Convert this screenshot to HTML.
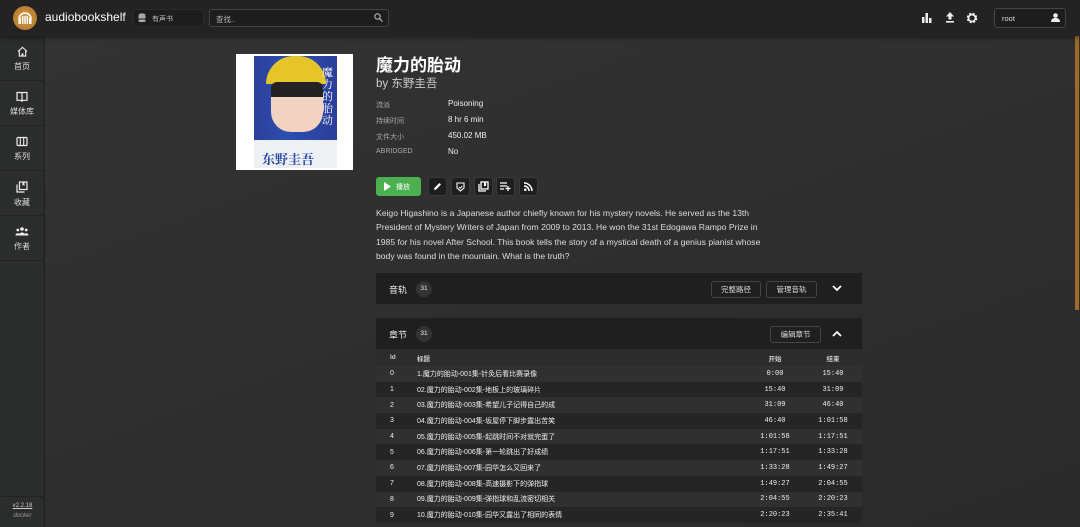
<!DOCTYPE html>
<html><head><meta charset="utf-8"><style>
*{margin:0;padding:0;box-sizing:border-box}
body{width:1080px;height:527px;overflow:hidden;background:#2d2d2d;font-family:"Liberation Sans","Noto Sans CJK SC",sans-serif;color:#eee;position:relative}
.hdr{position:absolute;left:0;top:0;width:1080px;height:36px;background:#232323;box-shadow:0 2px 4px rgba(0,0,0,.4);z-index:2}
.side{position:absolute;left:0;top:36px;width:45px;height:491px;background:#2b2d2d;border-right:1px solid #1f1f1f}
.nav{height:45px;border-bottom:1px solid #222;text-align:center;font-size:8px;color:#ddd;padding-top:10px}
.nav svg{display:block;margin:0 auto 4px}
.main{position:absolute;left:45px;top:36px;right:0;bottom:0;background:linear-gradient(160deg,#333 0%,#2a2a2a 100%)}
.abs{position:absolute}
.ib{position:absolute;top:177px;width:19px;height:19px;background:#1e1e1e;border:1px solid #3a3a3a;border-radius:3px;display:flex;align-items:center;justify-content:center}
.lbl{position:absolute;left:376px;font-size:7px;color:#aaa}
.val{position:absolute;left:448px;font-size:8px;color:#eee}
.panel{position:absolute;left:376px;width:486px;background:#1f1f1f}
.badge{position:absolute;width:16px;height:16px;border-radius:8px;background:#333;font-size:6.5px;text-align:center;line-height:16px}
.btn{position:absolute;height:17px;border:1px solid #444;border-radius:3px;font-size:7.5px;line-height:15px;text-align:center;color:#ddd}
table{position:absolute;left:376px;top:349px;width:486px;border-collapse:collapse;font-size:7px}
td{height:15.7px;padding:0}
tr:nth-child(odd){background:#252525}tr:nth-child(even){background:#303030}
tr.h{background:#2c2c2c}tr.h td{height:17px;font-size:6.5px;color:#ccc;font-weight:bold}
.m{font-family:"Liberation Mono",monospace;text-align:center}
</style></head><body>
<div class="hdr">
 <div class="abs" style="left:13px;top:6px;width:24px;height:24px;border-radius:12px;background:radial-gradient(circle,#d9a050,#a86e22)"></div>
 <svg class="abs" style="left:17px;top:10px" width="16" height="16" viewBox="0 0 16 16"><path d="M2 9a6 6 0 0112 0" fill="none" stroke="#fff" stroke-width="1.6"/><rect x="1.5" y="8" width="2.5" height="6" fill="#fff"/><rect x="12" y="8" width="2.5" height="6" fill="#fff"/><rect x="5" y="6" width="1.4" height="8" fill="#fff"/><rect x="7.3" y="6" width="1.4" height="8" fill="#fff"/><rect x="9.6" y="6" width="1.4" height="8" fill="#fff"/></svg>
 <div class="abs" style="left:45px;top:10px;font-size:12px;color:#fff">audiobookshelf</div>
 <div class="abs" style="left:133px;top:9px;width:71px;height:18px;background:#1d1d1d;border:1px solid #2a2a2a;border-radius:3px;font-size:7px;color:#bbb;padding:4px 0 0 18px">有声书</div>
 <svg class="abs" style="left:138px;top:13px" width="8" height="10"><ellipse cx="4" cy="2" rx="3.5" ry="1.6" fill="#aaa"/><rect x=".5" y="3" width="7" height="2.5" fill="#aaa"/><rect x=".5" y="6.5" width="7" height="2.5" rx="1" fill="#aaa"/></svg>
 <div class="abs" style="left:209px;top:9px;width:180px;height:18px;background:#1d1d1d;border:1px solid #444;border-radius:3px;font-size:7.5px;color:#bbb;padding:4px 0 0 6px">查找..</div>
 <svg class="abs" style="left:374px;top:13px" width="9" height="9"><circle cx="3.5" cy="3.5" r="2.7" fill="none" stroke="#bbb" stroke-width="1.1"/><path d="M5.5 5.5L8.5 8.5" stroke="#bbb" stroke-width="1.2"/></svg>
 <svg class="abs" style="left:922px;top:13px" width="10" height="10"><rect x="0" y="4" width="2.5" height="6" fill="#eee"/><rect x="3.5" y="0" width="2.5" height="10" fill="#eee"/><rect x="7" y="5" width="2.5" height="5" fill="#eee"/></svg>
 <svg class="abs" style="left:945px;top:12px" width="10" height="11"><path d="M5 0L9 4.5H6.5V7.5h-3V4.5H1z" fill="#eee"/><rect x="1" y="9" width="8" height="1.6" fill="#eee"/></svg>
 <svg class="abs" style="left:966px;top:12px" width="12" height="12" viewBox="0 0 12 12"><circle cx="6" cy="6" r="4" fill="none" stroke="#eee" stroke-width="2.6" stroke-dasharray="2 1.2"/><circle cx="6" cy="6" r="3.4" fill="none" stroke="#eee" stroke-width="1.6"/></svg>
 <div class="abs" style="left:994px;top:8px;width:72px;height:20px;border:1px solid #444;border-radius:3px;background:#1d1d1d;font-size:7.5px;color:#ddd;padding:5px 0 0 7px">root</div>
 <svg class="abs" style="left:1051px;top:13px" width="9" height="9"><circle cx="4.5" cy="2.5" r="2.3" fill="#eee"/><path d="M0 9c0-3 2-4 4.5-4S9 6 9 9z" fill="#eee"/></svg>
</div>
<div class="side">
 <div class="nav"><svg width="11" height="11" viewBox="0 0 12 12"><path d="M1 6L6 1.5 11 6M2.5 5v6h7V5" fill="none" stroke="#eee" stroke-width="1.2"/><rect x="5" y="8" width="2" height="3" fill="#eee"/></svg>首页</div>
 <div class="nav"><svg width="12" height="11" viewBox="0 0 12 11"><path d="M1 1.5h4c.6 0 1 .4 1 1V10c-.3-.5-.7-.7-1.2-.7H1zM11 1.5H7c-.6 0-1 .4-1 1V10c.3-.5.7-.7 1.2-.7H11z" fill="none" stroke="#eee" stroke-width="1.2"/></svg>媒体库</div>
 <div class="nav"><svg width="12" height="11" viewBox="0 0 12 11"><rect x="1" y="1.5" width="10" height="8" rx="1" fill="none" stroke="#eee" stroke-width="1.2"/><path d="M4.3 1.5v8M7.7 1.5v8" stroke="#eee" stroke-width="1.1"/></svg>系列</div>
 <div class="nav"><svg width="12" height="12" viewBox="0 0 12 12"><rect x="3.5" y="1" width="7.5" height="7.5" fill="none" stroke="#eee" stroke-width="1.2"/><path d="M1 3.5V11h7.5" fill="none" stroke="#eee" stroke-width="1.2"/><path d="M6.5 1v4l1-1 1 1V1" fill="#eee"/></svg>收藏</div>
 <div class="nav"><svg width="14" height="11" viewBox="0 0 14 11"><circle cx="7" cy="3" r="1.8" fill="#eee"/><circle cx="2.8" cy="4" r="1.4" fill="#eee"/><circle cx="11.2" cy="4" r="1.4" fill="#eee"/><path d="M4 9.5c0-2 1.3-3 3-3s3 1 3 3zM0.5 9.5c0-1.5.9-2.3 2.3-2.3S5 8 5 9.5zM9 9.5c0-1.5.9-2.3 2.2-2.3s2.3.8 2.3 2.3z" fill="#eee"/></svg>作者</div>
 <div class="abs" style="left:0;top:460px;width:45px;border-top:1px solid #222;text-align:center;padding-top:6px;font-size:6px;color:#ccc;text-decoration:underline">v2.2.18</div>
 <div class="abs" style="left:0;top:477px;width:45px;text-align:center;font-size:6px;color:#999;font-style:italic">docker</div>
</div>
<div class="main"></div>
<div class="abs" style="left:1075px;top:36px;width:4px;height:274px;background:#9c6a2c"></div>

<div class="abs" style="left:236px;top:54px;width:117px;height:116px;background:#fff"></div>
<div class="abs" style="left:254px;top:56px;width:83px;height:84px;background:linear-gradient(90deg,#2b3f9a,#2c4fb0 40%,#2a3f9a)"></div>
<div class="abs" style="left:266px;top:56px;width:60px;height:28px;border-radius:30px 30px 0 0;background:#e6c52a"></div>
<div class="abs" style="left:271px;top:82px;width:52px;height:50px;border-radius:6px 6px 20px 20px;background:linear-gradient(#222 0 30%,#f2d2c2 30%)"></div>
<div class="abs" style="left:254px;top:140px;width:83px;height:28px;background:#eef1f4"></div>
<div class="abs" style="left:262px;top:149px;font-size:13px;font-weight:bold;color:#2a48a8;font-family:'Noto Serif CJK SC',serif">东野圭吾</div>
<div class="abs" style="left:322px;top:66px;width:12px;font-size:11px;line-height:12px;color:#fff;font-family:'Noto Serif CJK SC',serif">魔力的胎动</div>

<div class="abs" style="left:376px;top:51px;font-size:17px;font-weight:bold;color:#fff">魔力的胎动</div>
<div class="abs" style="left:376px;top:75px;font-size:11.5px;color:#ccc">by 东野圭吾</div>
<div class="lbl" style="top:100px">流派</div><div class="val" style="top:99px">Poisoning</div>
<div class="lbl" style="top:116px">持续时间</div><div class="val" style="top:115px">8 hr 6 min</div>
<div class="lbl" style="top:132px">文件大小</div><div class="val" style="top:131px">450.02 MB</div>
<div class="lbl" style="top:148px">ABRIDGED</div><div class="val" style="top:147px">No</div>

<div class="abs" style="left:376px;top:177px;width:45px;height:19px;background:#4caf50;border-radius:3px;font-size:7px;color:#fff;padding:5px 0 0 20px">播放</div>
<svg class="abs" style="left:384px;top:182px" width="8" height="9"><path d="M0 0L7 4.5 0 9z" fill="#fff"/></svg>
<div class="ib" style="left:428px"><svg width="9" height="9"><path d="M1 8l.5-2.2L6.5 1 8 2.5 3.2 7.5z" fill="#fff"/></svg></div>
<div class="ib" style="left:451px"><svg width="9" height="10"><path d="M1 1h7v5L4.5 9 1 6z" fill="none" stroke="#fff" stroke-width="1.1"/><path d="M3 5l1.3 1.3L6.3 4" fill="none" stroke="#fff" stroke-width="1"/></svg></div>
<div class="ib" style="left:474px"><svg width="11" height="11"><rect x="3" y="1" width="7" height="7" fill="none" stroke="#fff" stroke-width="1.3"/><path d="M1 3v7h7" fill="none" stroke="#fff" stroke-width="1.3"/><rect x="6" y="1" width="2" height="4" fill="#fff"/></svg></div>
<div class="ib" style="left:496px"><svg width="11" height="9"><path d="M0 1h7M0 4h7M0 7h4" stroke="#fff" stroke-width="1.3"/><path d="M8 4v5M5.5 6.5h5" stroke="#fff" stroke-width="1.3"/></svg></div>
<div class="ib" style="left:519px"><svg width="9" height="9"><circle cx="1.3" cy="7.7" r="1.3" fill="#fff"/><path d="M0 4a5 5 0 015 5M0 1a8 8 0 018 8" fill="none" stroke="#fff" stroke-width="1.5"/></svg></div>

<div class="abs" style="left:376px;top:206px;white-space:nowrap;font-size:8.6px;line-height:14.3px;color:#ddd">Keigo Higashino is a Japanese author chiefly known for his mystery novels. He served as the 13th<br>President of Mystery Writers of Japan from 2009 to 2013. He won the 31st Edogawa Rampo Prize in<br>1985 for his novel After School. This book tells the story of a mystical death of a genius pianist whose<br>body was found in the mountain. What is the truth?</div>

<div class="panel" style="top:273px;height:31px">
 <div class="abs" style="left:13px;top:10px;font-size:9px">音轨</div>
 <div class="badge" style="left:40px;top:8px">31</div>
 <div class="btn" style="left:335px;top:8px;width:50px">完整路径</div>
 <div class="btn" style="left:390px;top:8px;width:51px">管理音轨</div>
 <svg class="abs" style="left:456px;top:12px" width="10" height="7"><path d="M1 1l4 4 4-4" fill="none" stroke="#fff" stroke-width="1.8"/></svg>
</div>
<div class="panel" style="top:318px;height:31px">
 <div class="abs" style="left:13px;top:10px;font-size:9px">章节</div>
 <div class="badge" style="left:40px;top:8px">31</div>
 <div class="btn" style="left:394px;top:8px;width:51px">编辑章节</div>
 <svg class="abs" style="left:456px;top:12px" width="10" height="7"><path d="M1 6l4-4 4 4" fill="none" stroke="#fff" stroke-width="1.8"/></svg>
</div>
<table>
<tr class="h"><td style="width:41px;padding-left:14px">Id</td><td>标题</td><td class="m" style="width:58px;font-family:inherit">开始</td><td class="m" style="width:58px;font-family:inherit">结束</td></tr>
<tr><td style="padding-left:14px">0</td><td>1.魔力的胎动-001集-针灸后看比赛录像</td><td class="m">0:00</td><td class="m">15:40</td></tr>
<tr><td style="padding-left:14px">1</td><td>02.魔力的胎动-002集-地板上的玻璃碎片</td><td class="m">15:40</td><td class="m">31:09</td></tr>
<tr><td style="padding-left:14px">2</td><td>03.魔力的胎动-003集-希望儿子记得自己的成</td><td class="m">31:09</td><td class="m">46:40</td></tr>
<tr><td style="padding-left:14px">3</td><td>04.魔力的胎动-004集-坂屋停下脚步露出苦笑</td><td class="m">46:40</td><td class="m">1:01:58</td></tr>
<tr><td style="padding-left:14px">4</td><td>05.魔力的胎动-005集-起跳时间不对就完蛋了</td><td class="m">1:01:58</td><td class="m">1:17:51</td></tr>
<tr><td style="padding-left:14px">5</td><td>06.魔力的胎动-006集-第一轮跳出了好成绩</td><td class="m">1:17:51</td><td class="m">1:33:28</td></tr>
<tr><td style="padding-left:14px">6</td><td>07.魔力的胎动-007集-园华怎么又回来了</td><td class="m">1:33:28</td><td class="m">1:49:27</td></tr>
<tr><td style="padding-left:14px">7</td><td>08.魔力的胎动-008集-高速摄影下的弹指球</td><td class="m">1:49:27</td><td class="m">2:04:55</td></tr>
<tr><td style="padding-left:14px">8</td><td>09.魔力的胎动-009集-弹指球和乱流密切相关</td><td class="m">2:04:55</td><td class="m">2:20:23</td></tr>
<tr><td style="padding-left:14px">9</td><td>10.魔力的胎动-010集-园华又露出了相同的表情</td><td class="m">2:20:23</td><td class="m">2:35:41</td></tr>
</table>
</body></html>
